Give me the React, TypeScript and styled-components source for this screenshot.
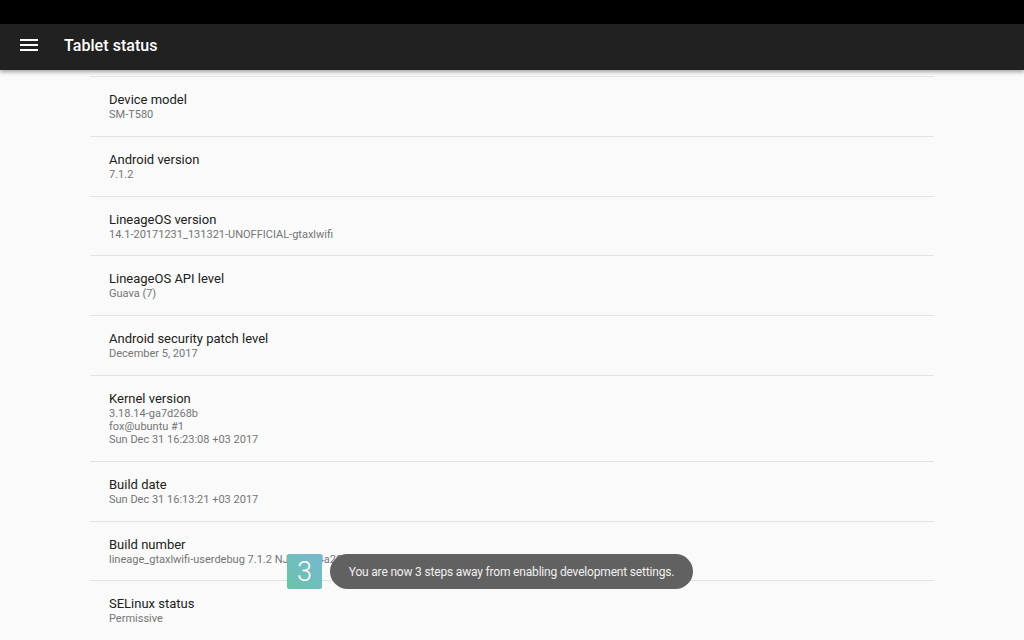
import styled, { createGlobalStyle } from 'styled-components';

const GlobalStyle = createGlobalStyle`
  html, body {
    margin: 0;
    padding: 0;
    background: #fafafa;
    font-family: Roboto, 'Noto Sans', sans-serif;
  }
`;

const items: { title: string; summary: string[] }[] = [
  { title: 'Device model', summary: ['SM-T580'] },
  { title: 'Android version', summary: ['7.1.2'] },
  { title: 'LineageOS version', summary: ['14.1-20171231_131321-UNOFFICIAL-gtaxlwifi'] },
  { title: 'LineageOS API level', summary: ['Guava (7)'] },
  { title: 'Android security patch level', summary: ['December 5, 2017'] },
  {
    title: 'Kernel version',
    summary: ['3.18.14-ga7d268b', 'fox@ubuntu #1', 'Sun Dec 31 16:23:08 +03 2017'],
  },
  { title: 'Build date', summary: ['Sun Dec 31 16:13:21 +03 2017'] },
  { title: 'Build number', summary: ['lineage_gtaxlwifi-userdebug 7.1.2 NJH47F 4a207fae24 test-keys'] },
  { title: 'SELinux status', summary: ['Permissive'] },
];

export default function App() {
  return (
    <Screen>
      <GlobalStyle />
      <StatusBar />
      <AppBar>
        <MenuIcon viewBox="0 0 24 24">
          <path d="M3 6h18v2H3zM3 11h18v2H3zM3 16h18v2H3z" fill="#fff" />
        </MenuIcon>
        <Title>Tablet status</Title>
      </AppBar>
      <Content>
        <List>
          {items.map((item) => (
            <Row key={item.title}>
              <RowTitle>{item.title}</RowTitle>
              {item.summary.map((line) => (
                <Summary key={line}>{line}</Summary>
              ))}
            </Row>
          ))}
        </List>
        <Badge>3</Badge>
        <Toast>You are now 3 steps away from enabling development settings.</Toast>
      </Content>
    </Screen>
  );
}

const Screen = styled.div`
  width: 1024px;
  height: 640px;
  overflow: hidden;
  display: flex;
  flex-direction: column;
  background: #fafafa;
`;

const StatusBar = styled.div`
  height: 24px;
  background: #000;
  flex-shrink: 0;
`;

const AppBar = styled.header`
  height: 46px;
  box-sizing: border-box;
  padding: 0 0 4px 17px;
  flex-shrink: 0;
  background: #212121;
  display: flex;
  align-items: center;
  box-shadow: 0 2px 4px rgba(0, 0, 0, 0.35);
  position: relative;
  z-index: 2;
`;

const MenuIcon = styled.svg`
  width: 24px;
  height: 24px;
`;

const Title = styled.h1`
  margin: 0 0 0 23px;
  color: #fff;
  font-size: 16px;
  font-weight: 500;
  letter-spacing: 0.05px;
`;

const Content = styled.main`
  flex: 1;
  position: relative;
  padding: 6px 90px 0;
`;

const List = styled.div`
  border-top: 1px solid #e3e3e3;
`;

const Row = styled.div`
  padding: 15px 19px 14.8px;
  border-bottom: 1px solid #e3e3e3;
`;

const RowTitle = styled.div`
  font-size: 13px;
  line-height: 16px;
  color: #212121;
`;

const Summary = styled.div`
  font-size: 11px;
  line-height: 13px;
  color: #757575;
`;

const Badge = styled.div`
  position: absolute;
  left: 287px;
  top: 484px;
  width: 35px;
  height: 35px;
  border-radius: 2px;
  background: linear-gradient(45deg, #6ac3a6 0%, #77b8d2 100%);
  color: #fff;
  font-size: 27px;
  font-weight: 300;
  display: flex;
  align-items: center;
  justify-content: center;
  z-index: 3;
`;

const Toast = styled.div`
  position: absolute;
  left: 330px;
  top: 484px;
  width: 363px;
  height: 35px;
  box-sizing: border-box;
  border-radius: 18px;
  background: #616161;
  color: #f0f0f0;
  font-size: 12px;
  display: flex;
  align-items: center;
  justify-content: center;
  letter-spacing: -0.18px;
  z-index: 2;
`;
